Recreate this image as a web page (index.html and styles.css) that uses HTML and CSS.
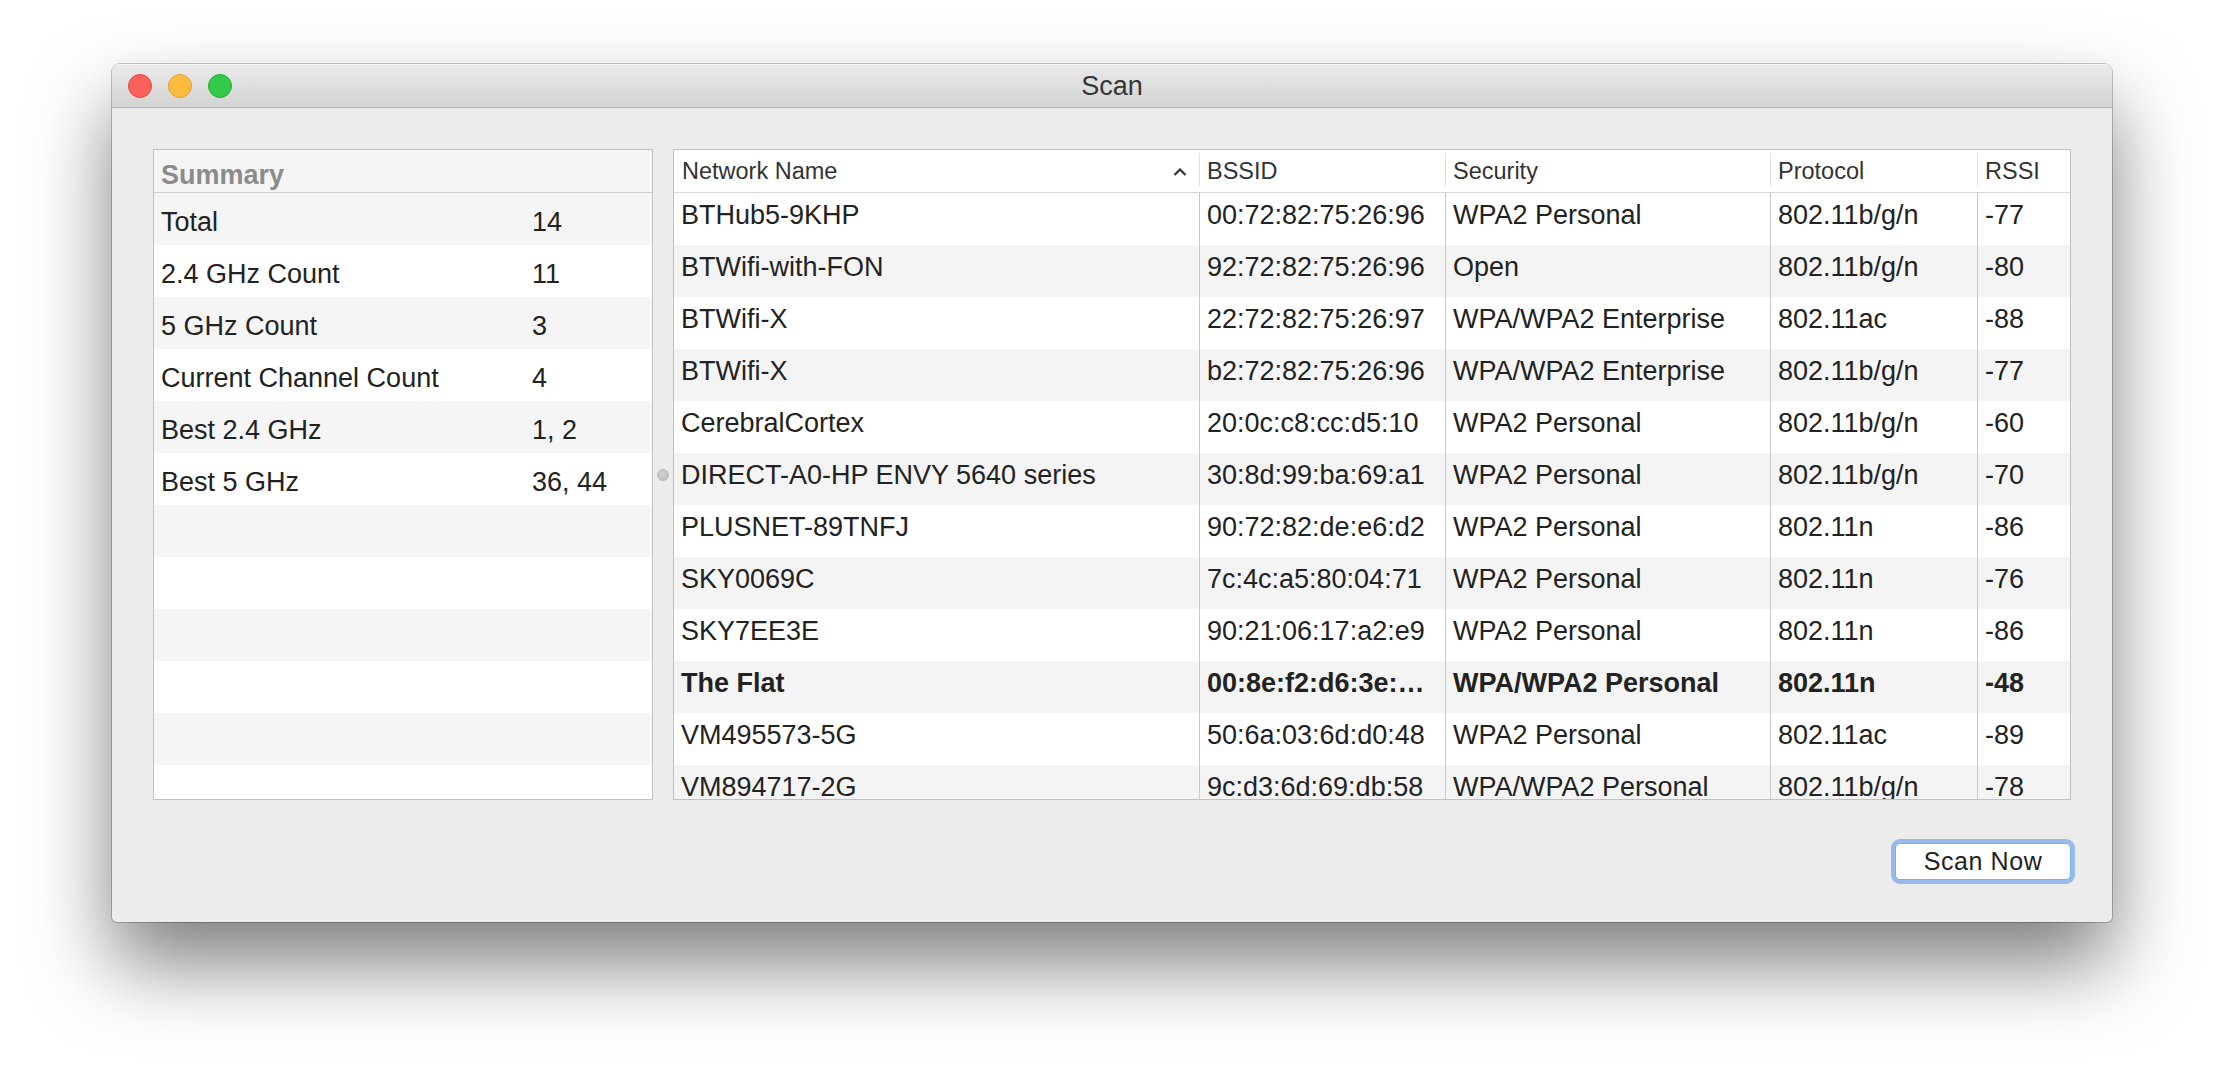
FILE: index.html
```html
<!DOCTYPE html>
<html>
<head>
<meta charset="utf-8">
<title>Scan</title>
<link rel="stylesheet" href="styles.css">
</head>
<body>
<div class="window">
  <div class="titlebar">
    <div class="lights">
      <span class="light red"></span>
      <span class="light yellow"></span>
      <span class="light green"></span>
    </div>
    <div class="title">Scan</div>
    <div></div>
  </div>
  <div class="content">
    <div class="split">
      <div class="summary">
        <div class="sum-head">Summary</div>
        <div class="sum-body">
          <div class="srow alt"><span class="lbl">Total</span><span class="val">14</span></div>
          <div class="srow"><span class="lbl">2.4 GHz Count</span><span class="val">11</span></div>
          <div class="srow alt"><span class="lbl">5 GHz Count</span><span class="val">3</span></div>
          <div class="srow"><span class="lbl">Current Channel Count</span><span class="val">4</span></div>
          <div class="srow alt"><span class="lbl">Best 2.4 GHz</span><span class="val">1, 2</span></div>
          <div class="srow"><span class="lbl">Best 5 GHz</span><span class="val">36, 44</span></div>
          <div class="srow alt"></div>
          <div class="srow"></div>
          <div class="srow alt"></div>
          <div class="srow"></div>
          <div class="srow alt"></div>
          <div class="srow"></div>
        </div>
      </div>
      <div class="divider"><span class="dot"></span></div>
      <div class="networks">
        <div class="thead">
          <div class="th first"><span>Network Name</span>
            <svg class="sort" width="14" height="8" viewBox="0 0 14 8"><polyline points="1.5,7 7,1.5 12.5,7" fill="none" stroke="#333333" stroke-width="2.2"/></svg>
          </div>
          <div class="th">BSSID</div>
          <div class="th">Security</div>
          <div class="th">Protocol</div>
          <div class="th">RSSI</div>
        </div>
        <div class="tbody">
          <div class="tr"><div class="td">BTHub5-9KHP</div><div class="td">00:72:82:75:26:96</div><div class="td">WPA2 Personal</div><div class="td">802.11b/g/n</div><div class="td">-77</div></div>
          <div class="tr alt"><div class="td">BTWifi-with-FON</div><div class="td">92:72:82:75:26:96</div><div class="td">Open</div><div class="td">802.11b/g/n</div><div class="td">-80</div></div>
          <div class="tr"><div class="td">BTWifi-X</div><div class="td">22:72:82:75:26:97</div><div class="td">WPA/WPA2 Enterprise</div><div class="td">802.11ac</div><div class="td">-88</div></div>
          <div class="tr alt"><div class="td">BTWifi-X</div><div class="td">b2:72:82:75:26:96</div><div class="td">WPA/WPA2 Enterprise</div><div class="td">802.11b/g/n</div><div class="td">-77</div></div>
          <div class="tr"><div class="td">CerebralCortex</div><div class="td">20:0c:c8:cc:d5:10</div><div class="td">WPA2 Personal</div><div class="td">802.11b/g/n</div><div class="td">-60</div></div>
          <div class="tr alt"><div class="td">DIRECT-A0-HP ENVY 5640 series</div><div class="td">30:8d:99:ba:69:a1</div><div class="td">WPA2 Personal</div><div class="td">802.11b/g/n</div><div class="td">-70</div></div>
          <div class="tr"><div class="td">PLUSNET-89TNFJ</div><div class="td">90:72:82:de:e6:d2</div><div class="td">WPA2 Personal</div><div class="td">802.11n</div><div class="td">-86</div></div>
          <div class="tr alt"><div class="td">SKY0069C</div><div class="td">7c:4c:a5:80:04:71</div><div class="td">WPA2 Personal</div><div class="td">802.11n</div><div class="td">-76</div></div>
          <div class="tr"><div class="td">SKY7EE3E</div><div class="td">90:21:06:17:a2:e9</div><div class="td">WPA2 Personal</div><div class="td">802.11n</div><div class="td">-86</div></div>
          <div class="tr alt bold"><div class="td">The Flat</div><div class="td">00:8e:f2:d6:3e:…</div><div class="td">WPA/WPA2 Personal</div><div class="td">802.11n</div><div class="td">-48</div></div>
          <div class="tr"><div class="td">VM495573-5G</div><div class="td">50:6a:03:6d:d0:48</div><div class="td">WPA2 Personal</div><div class="td">802.11ac</div><div class="td">-89</div></div>
          <div class="tr alt"><div class="td">VM894717-2G</div><div class="td">9c:d3:6d:69:db:58</div><div class="td">WPA/WPA2 Personal</div><div class="td">802.11b/g/n</div><div class="td">-78</div></div>
        </div>
      </div>
    </div>
    <div class="footer">
      <button class="btn">Scan Now</button>
    </div>
  </div>
</div>
</body>
</html>
```
FILE: styles.css
```css
* { box-sizing: border-box; }
html, body { margin: 0; padding: 0; }
body {
  background: #ffffff;
  font-family: "Liberation Sans", Arial, sans-serif;
  color: #222222;
  width: 2224px;
  height: 1082px;
  overflow: hidden;
  padding: 64px 0 0 112px;
}
.window {
  width: 2000px;
  height: 858px;
  background: #ececec;
  border-radius: 8px 8px 5px 5px;
  box-shadow: 0 0 0 1px rgba(0,0,0,0.22), 0 42px 80px rgba(0,0,0,0.5);
  display: flex;
  flex-direction: column;
  overflow: hidden;
}
.titlebar {
  height: 44px;
  flex: none;
  background: linear-gradient(#ebeaeb, #d4d3d4);
  border-bottom: 1px solid #b3b3b3;
  box-shadow: inset 0 1px 0 rgba(255,255,255,0.6);
  display: grid;
  grid-template-columns: 1fr auto 1fr;
  align-items: start;
}
.lights {
  display: flex;
  gap: 16px;
  padding: 10px 0 0 16px;
}
.light {
  width: 24px;
  height: 24px;
  border-radius: 50%;
  display: block;
}
.red { background: #fc605b; border: 1px solid #de4a45; }
.yellow { background: #fdbc40; border: 1px solid #dea033; }
.green { background: #34c84a; border: 1px solid #27a937; }
.title {
  font-size: 27px;
  line-height: 41px;
  padding-top: 2px;
  color: #363636;
}
.content {
  flex: 1;
  padding: 41px 41px 0 41px;
  display: flex;
  flex-direction: column;
}
.split {
  display: flex;
  height: 651px;
  flex: none;
}
.summary {
  width: 500px;
  height: 651px;
  border: 1px solid #c2c2c2;
  background: #ffffff;
  display: flex;
  flex-direction: column;
  overflow: hidden;
}
.sum-head {
  height: 43px;
  flex: none;
  background: #f5f5f5;
  border-bottom: 1px solid #cfcfcf;
  font-size: 27px;
  font-weight: bold;
  color: #8b8b8b;
  padding: 8px 0 0 7px;
  line-height: 34px;
}
.sum-body { flex: 1; overflow: hidden; }
.srow {
  height: 52px;
  display: grid;
  grid-template-columns: 371px 1fr;
  font-size: 27px;
  line-height: 45px;
  padding-top: 7px;
  background: #ffffff;
  color: #222222;
}
.srow.alt { background: #f5f5f5; }
.lbl { padding-left: 7px; white-space: nowrap; }
.val { padding-left: 7px; white-space: nowrap; }
.divider {
  width: 20px;
  flex: none;
  display: flex;
  align-items: center;
  justify-content: center;
}
.dot {
  width: 12px;
  height: 12px;
  border-radius: 50%;
  background: radial-gradient(circle at 50% 35%, #d0d0d0, #bebebe);
  border: 1px solid #b8b8b8;
}
.networks {
  width: 1398px;
  height: 651px;
  border: 1px solid #c2c2c2;
  background: #ffffff;
  display: flex;
  flex-direction: column;
  overflow: hidden;
}
.thead {
  height: 43px;
  flex: none;
  display: grid;
  grid-template-columns: 525px 246px 325px 207px 1fr;
  border-bottom: 1px solid #d6d6d6;
  background: #ffffff;
}
.th {
  position: relative;
  font-size: 23.5px;
  line-height: 42px;
  color: #333333;
  padding-left: 8px;
  white-space: nowrap;
}
.th + .th::before {
  content: "";
  position: absolute;
  left: 0;
  top: 3px;
  bottom: 5px;
  width: 1px;
  background: #e0e0e0;
}
.th.first {
  display: flex;
  justify-content: space-between;
  align-items: center;
  padding-right: 12px;
}
.sort { display: block; margin-top: 1px; }
.tbody { flex: 1; overflow: hidden; }
.tr {
  height: 52px;
  display: grid;
  grid-template-columns: 525px 246px 325px 207px 1fr;
  background: #ffffff;
}
.tr.alt { background: #f4f4f4; }
.td {
  font-size: 27px;
  line-height: 45px;
  padding: 0 0 7px 7px;
  white-space: nowrap;
  overflow: hidden;
  color: #222222;
}
.td + .td { border-left: 1px solid #c9c9c9; }
.tr.bold .td { font-weight: bold; }
.footer {
  display: flex;
  justify-content: flex-end;
  padding-top: 43px;
}
.btn {
  width: 176px;
  height: 37px;
  background: #ffffff;
  border: 1px solid #7eaee9;
  border-radius: 5px;
  box-shadow: 0 0 0 4px rgba(120, 170, 235, 0.75);
  font-family: "Liberation Sans", Arial, sans-serif;
  font-size: 25px;
  letter-spacing: 0.6px;
  color: #222222;
  padding: 0;
  line-height: 35px;
}
```
